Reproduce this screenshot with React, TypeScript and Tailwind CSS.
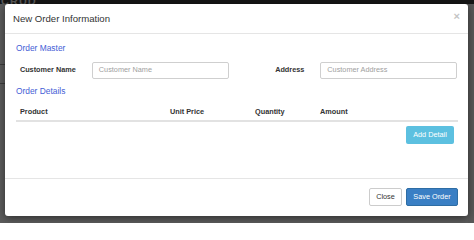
import React from "react";

const font = { fontFamily: '"Liberation Sans", Arial, sans-serif' };

export default function App() {
  return (
    <div
      className="relative w-[474px] h-[223px] overflow-hidden bg-[#5c5c5c]"
      style={font}
    >
      {/* underlying page hints behind backdrop */}
      <div className="absolute left-0 top-0 w-full h-[4px] bg-[#161616]" />
      <div className="absolute left-[1px] top-[-7px] text-[11px] font-bold tracking-[1px] text-[#5a5a5a]">CRUD</div>
      <div className="absolute left-0 top-[64px] w-[5px] h-[1px] bg-[#3c3c3c]" />
      <div className="absolute left-0 top-[83px] w-[5px] h-[1px] bg-[#3c3c3c]" />
      <div className="absolute right-0 top-[4px] w-[6px] h-[219px] bg-[#595959]" />

      <div className="relative pl-[5px] pt-[4px]">
        <div className="w-[463px] h-[212px] bg-white rounded-[3px] shadow-[0_2px_8px_rgba(0,0,0,0.5)] flex flex-col">
          {/* header */}
          <div className="h-[30px] border-b border-[#e5e5e5] flex items-center justify-between pl-[8px] pr-[8px]">
            <span className="text-[9.6px] text-[#333] leading-none">New Order Information</span>
            <span className="text-[11px] font-bold text-[#c4c4c4] leading-none mt-[-4px]">×</span>
          </div>

          {/* body */}
          <div className="h-[144px] flex flex-col px-[11px] pt-[8px]">
            <div className="h-[13px] flex items-center text-[8.4px] text-[#4560d6]">Order Master</div>

            <div className="mt-[7px] h-[17px] flex items-center">
              <div className="w-[60px] text-right text-[7.3px] font-bold text-[#333]">Customer Name</div>
              <div className="ml-[16px] w-[137px] h-[17px] border border-[#cfcfcf] rounded-[2px] flex items-center pl-[6px] text-[7.3px] text-[#a0a0a0]">
                Customer Name
              </div>
              <div className="w-[76px] text-right text-[7.3px] font-bold text-[#333]">Address</div>
              <div className="ml-[16px] w-[137px] h-[17px] border border-[#cfcfcf] rounded-[2px] flex items-center pl-[6px] text-[7.3px] text-[#a0a0a0]">
                Customer Address
              </div>
            </div>

            <div className="mt-[6px] h-[12px] flex items-center text-[8.4px] text-[#4560d6]">Order Details</div>

            <div className="mt-[4px] w-[442px] h-[21px] pt-[3px] border-b-2 border-[#e2e2e2] flex items-center text-[7.3px] font-bold text-[#333]">
              <div className="w-[154px] pl-[4px]">Product</div>
              <div className="w-[85px]">Unit Price</div>
              <div className="w-[65px]">Quantity</div>
              <div>Amount</div>
            </div>

            <div className="mt-[4px] flex justify-end pr-[3px]">
              <div className="w-[48px] h-[18px] rounded-[2px] bg-[#5cc0e0] text-white text-[7.3px] flex items-center justify-center">
                Add Detail
              </div>
            </div>
          </div>

          {/* footer */}
          <div className="border-t border-[#e5e5e5] flex-1 flex justify-end items-start pt-[9px] pr-[10px] gap-[4px]">
            <div className="w-[33px] h-[18px] rounded-[2px] border border-[#ccc] bg-white text-[#333] text-[7.3px] flex items-center justify-center">
              Close
            </div>
            <div className="w-[52px] h-[18px] rounded-[2px] bg-[#3a7fc4] border border-[#2e6da4] text-white text-[7.3px] flex items-center justify-center">
              Save Order
            </div>
          </div>
        </div>
      </div>
    </div>
  );
}
